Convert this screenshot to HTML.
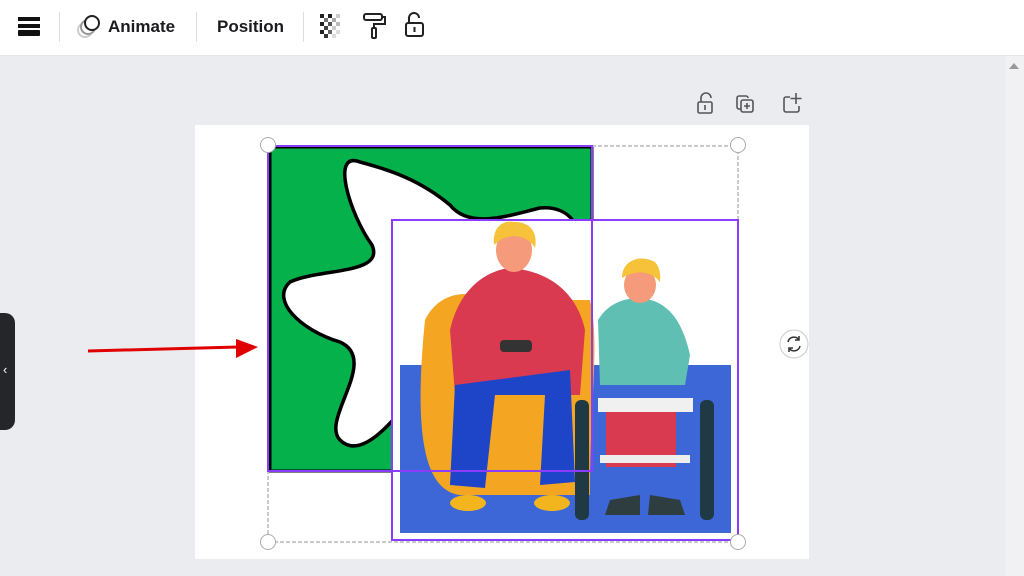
<!DOCTYPE html>
<html><head><meta charset="utf-8"><style>
body{margin:0;width:1024px;height:576px;overflow:hidden;background:#ebecf0;font-family:"Liberation Sans",sans-serif;position:relative}
.tb{position:absolute;left:0;top:0;width:1024px;height:55px;background:#fff;border-bottom:1px solid #e3e4e8}
.t{position:absolute;top:17px;font-size:17px;color:#1b1b1f;font-weight:600}
.sep{position:absolute;top:12px;width:1px;height:30px;background:#dcdde1}
.sb{position:absolute;right:0;top:56px;width:19px;height:520px;background:#f1f1f3}
</style></head><body>
<div class="tb">
<svg style="position:absolute;left:18px;top:17px" width="22" height="20"><rect x="0" y="0" width="22" height="4" fill="#111"/><rect x="0" y="7" width="22" height="4" fill="#111"/><rect x="0" y="13" width="22" height="6" rx="1" fill="#111"/></svg>
<div class="sep" style="left:59px"></div>
<svg style="position:absolute;left:76px;top:14px" width="26" height="26"><circle cx="9" cy="16" r="7" fill="none" stroke="#ccc" stroke-width="2"/><circle cx="12" cy="13" r="7" fill="#fff" stroke="#999" stroke-width="2"/><circle cx="16" cy="9" r="7" fill="#fff" stroke="#222" stroke-width="2"/></svg>
<div class="t" style="left:108px">Animate</div>
<div class="sep" style="left:196px"></div>
<div class="t" style="left:217px">Position</div>
<div class="sep" style="left:303px"></div>
<svg style="position:absolute;left:320px;top:14px" width="26" height="26"><g fill="#222"><rect x="0" y="0" width="4" height="4"/><rect x="8" y="0" width="4" height="4"/><rect x="4" y="4" width="4" height="4" fill="#777"/><rect x="0" y="8" width="4" height="4"/><rect x="8" y="8" width="4" height="4" fill="#555"/><rect x="4" y="12" width="4" height="4" fill="#444"/><rect x="0" y="16" width="4" height="4"/><rect x="8" y="16" width="4" height="4" fill="#666"/><rect x="12" y="4" width="4" height="4" fill="#aaa"/><rect x="16" y="0" width="4" height="4" fill="#ccc"/><rect x="16" y="8" width="4" height="4" fill="#bbb"/><rect x="12" y="12" width="4" height="4" fill="#ccc"/><rect x="4" y="20" width="4" height="4" fill="#333"/><rect x="16" y="16" width="4" height="4" fill="#ddd"/><rect x="12" y="20" width="4" height="4" fill="#ddd"/></g></svg>
<svg style="position:absolute;left:362px;top:12px" width="26" height="28" fill="none" stroke="#222" stroke-width="2"><rect x="2" y="2" width="18" height="6" rx="2"/><path d="M20 5h3v7h-11v4"/><rect x="10" y="16" width="4" height="10" rx="1"/></svg>
<svg style="position:absolute;left:404px;top:11px" width="22" height="28" fill="none" stroke="#222" stroke-width="2"><path d="M5 12V7a5 5 0 0 1 10 0"/><rect x="2" y="12" width="17" height="13" rx="2"/><path d="M10.5 16v5"/></svg>
</div>
<div class="sb"><svg style="position:absolute;left:4px;top:7px" width="10" height="6"><path d="M0 6L5 0L10 6Z" fill="#999"/></svg></div>
<svg style="position:absolute;left:696px;top:91px" width="110" height="24" fill="none" stroke="#555" stroke-width="1.6">
<path d="M5 11V7a5 5 0 0 1 10 0"/><rect x="2" y="11" width="14" height="11" rx="1.5"/><path d="M9 14v5"/>
<path d="M45 18h-2a2 2 0 0 1-2-2V7a2 2 0 0 1 2-2h7a2 2 0 0 1 2 2"/><rect x="45" y="9" width="12" height="12" rx="2"/><path d="M51 12v6M48 15h6"/>
<path d="M94 6h-4a2 2 0 0 0-2 2v11a2 2 0 0 0 2 2h11a2 2 0 0 0 2-2v-4M100 2v11M94.5 7.5h11"/>
</svg>
<div style="position:absolute;left:0;top:313px;width:15px;height:117px;background:#25262a;border-radius:0 10px 10px 0"></div>
<div style="position:absolute;left:3px;top:362px;color:#fff;font-size:13px">‹</div>
<svg style="position:absolute;left:0;top:0" width="1024" height="576">
<rect x="195" y="125" width="614" height="434" fill="#fff"/>
<path d="M88 351L238 347" stroke="#e00000" stroke-width="3"/><path d="M236 339L258 347L236 358Z" fill="#e00000"/>
<rect x="270" y="147" width="322" height="324" fill="#04b14a" stroke="#000" stroke-width="3"/>
<path d="M360 162C330 150 350 215 372 245C385 275 320 268 290 282C270 300 300 330 340 342C380 360 320 420 340 440C360 460 390 425 410 400L440 300L565 255C590 230 570 205 540 208C510 215 470 230 450 205C420 180 390 170 360 162Z" fill="#fff" stroke="#000" stroke-width="3.5"/>
<rect x="392" y="220" width="346" height="320" fill="#fff"/>
<rect x="400" y="365" width="331" height="168" fill="#3d66d6"/>
<path d="M425 320C440 290 470 290 490 300L590 300C600 340 590 400 590 495L460 495C420 490 415 420 425 320Z" fill="#f4a623"/>
<path d="M450 330C460 285 490 270 510 268C540 270 575 285 585 330L580 395L455 395Z" fill="#da3a4f"/>
<path d="M455 385L450 485L485 488L495 395L545 395L540 485L575 482L570 370Z" fill="#1e44c8"/>
<ellipse cx="514" cy="250" rx="18" ry="22" fill="#f59a7a"/><path d="M494 245C492 225 505 220 515 222C530 222 538 232 535 248C530 238 515 232 500 240Z" fill="#f6c23a"/>
<rect x="500" y="340" width="32" height="12" rx="4" fill="#333"/>
<ellipse cx="468" cy="503" rx="18" ry="8" fill="#f2b51e"/><ellipse cx="552" cy="503" rx="18" ry="8" fill="#f2b51e"/>
<rect x="575" y="400" width="14" height="120" rx="6" fill="#1f3a45"/><rect x="700" y="400" width="14" height="120" rx="6" fill="#1f3a45"/>
<path d="M598 320C610 300 630 298 640 298C660 300 680 310 690 355L685 385L600 385Z" fill="#5fbfb2"/>
<ellipse cx="640" cy="285" rx="16" ry="18" fill="#f59a7a"/><path d="M622 278C622 260 640 254 655 262C662 270 660 280 660 282C650 270 635 270 622 278Z" fill="#f6c23a"/>
<rect x="598" y="398" width="95" height="14" fill="#f0f0f0"/>
<rect x="606" y="412" width="70" height="55" fill="#da3a4f"/>
<rect x="600" y="455" width="90" height="8" fill="#eee"/>
<path d="M610 500L640 495L640 515L605 515Z" fill="#2e3e40"/><path d="M650 495L680 500L685 515L648 515Z" fill="#2e3e40"/>
<rect x="268" y="146" width="470" height="396" fill="none" stroke="#c9cace" stroke-width="2" stroke-dasharray="4 2"/>
<rect x="268" y="146" width="324" height="325" fill="none" stroke="#8b3dff" stroke-width="2"/>
<rect x="392" y="220" width="346" height="320" fill="none" stroke="#8b3dff" stroke-width="2"/>
<g fill="#fff" stroke="#aaa" stroke-width="1"><circle cx="268" cy="145" r="7.5"/><circle cx="738" cy="145" r="7.5"/><circle cx="268" cy="542" r="7.5"/><circle cx="738" cy="542" r="7.5"/><circle cx="794" cy="344" r="14" stroke="#ccc"/></g>
<path d="M788 342a6 6 0 0 1 11-2M800 346a6 6 0 0 1-11 2" fill="none" stroke="#333" stroke-width="1.5"/><path d="M799 336v4h-4M789 352v-4h4" fill="none" stroke="#333" stroke-width="1.5"/>
</svg>
</body></html>
